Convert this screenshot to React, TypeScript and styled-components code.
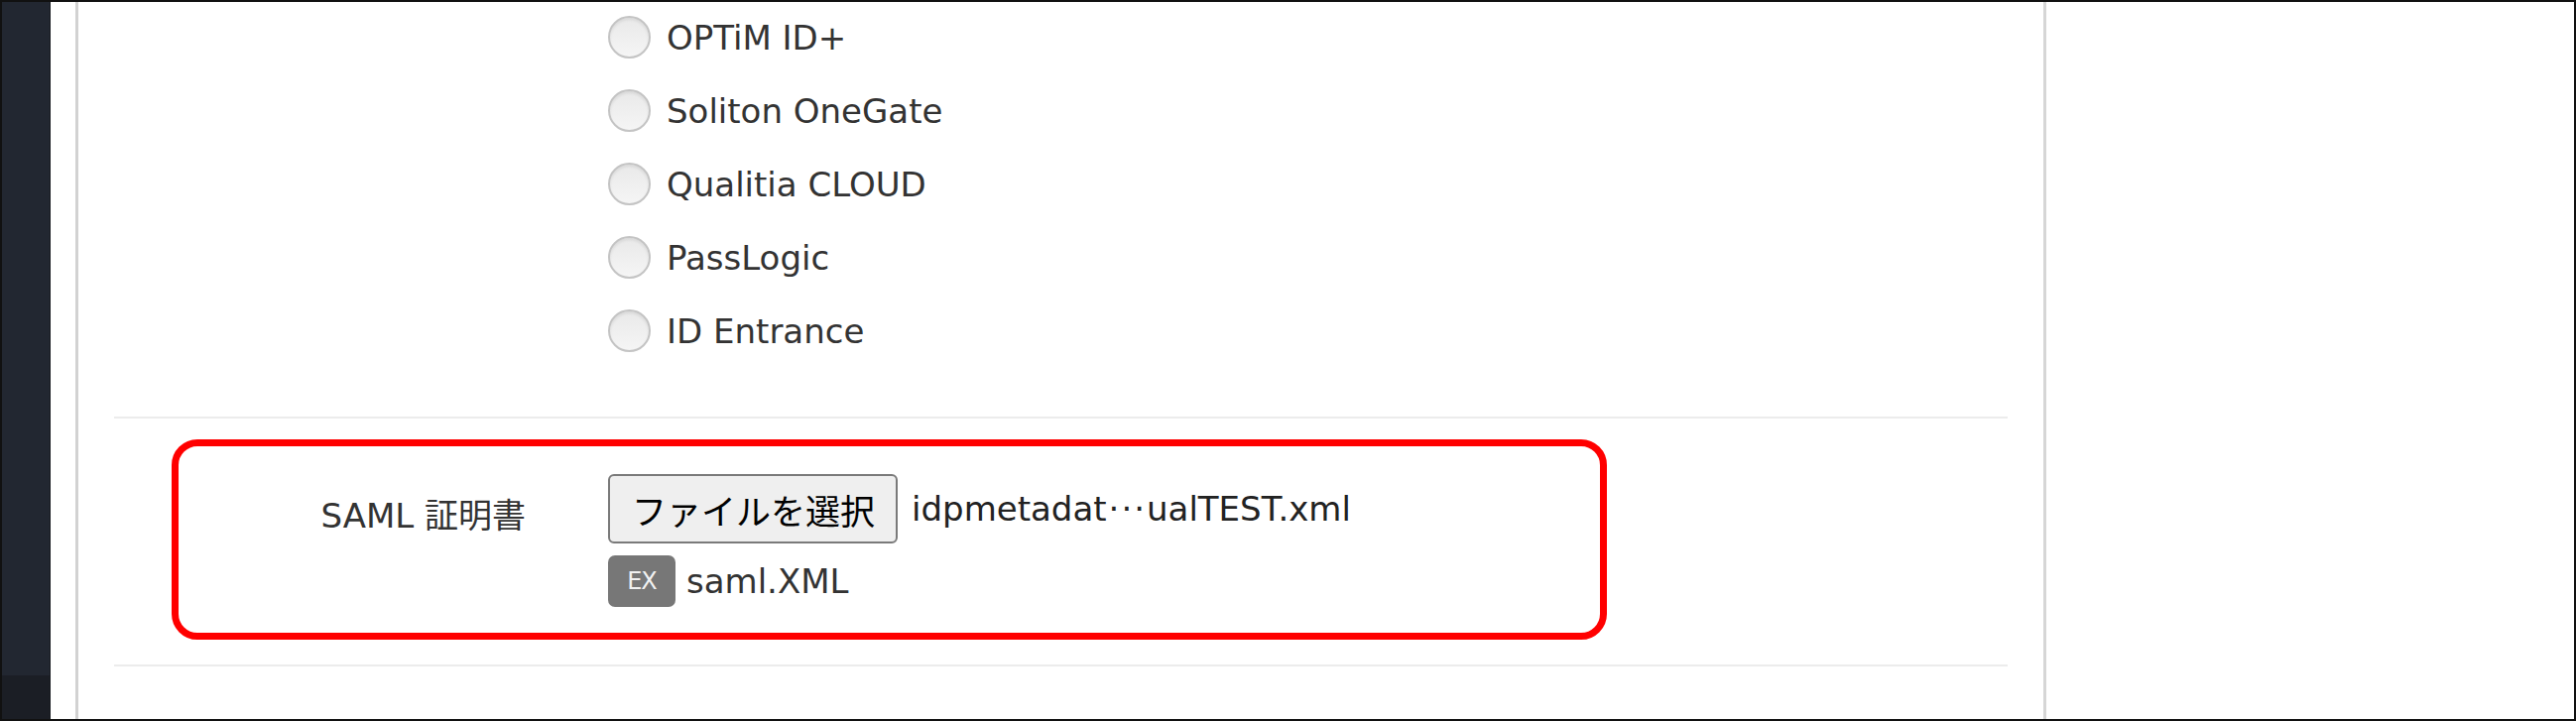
import React from "react";
import styled, { createGlobalStyle } from "styled-components";

const GlobalStyle = createGlobalStyle`
  html, body {
    margin: 0;
    padding: 0;
    background: #ffffff;
  }
  body {
    width: 2597px;
    height: 727px;
    overflow: hidden;
    font-family: "DejaVu Sans", "Noto Sans CJK JP", sans-serif;
    color: #333333;
  }
  * { box-sizing: border-box; }
`;

const Frame = styled.div`
  width: 2597px;
  height: 727px;
  border: 2px solid #111111;
  display: flex;
  background: #ffffff;
`;

const Sidebar = styled.aside`
  width: 49px;
  display: flex;
  flex-direction: column;
  border-right: 1px solid #15181d;
`;

const SidebarBody = styled.div`
  flex: 1;
  background: #222731;
`;

const SidebarFoot = styled.div`
  height: 44px;
  background: #1b1e25;
`;

const Gutter = styled.div`
  width: 28px;
  border-right: 3px solid #d2d2d2;
  background: #ffffff;
`;

const Main = styled.main`
  width: 1984px;
  padding: 0 36px;
  border-right: 3px solid #d6d6d6;
  display: flex;
  flex-direction: column;
`;

const Aside = styled.div`
  flex: 1;
  background: #ffffff;
`;

const FieldRow = styled.div<{ $labelWidth: number }>`
  display: grid;
  grid-template-columns: ${(p) => p.$labelWidth}px 1fr;
`;

const Divider = styled.hr`
  margin: 0;
  border: 0;
  height: 2px;
  background: #ececec;
`;

const RadioList = styled.div`
  display: flex;
  flex-direction: column;
  gap: 31px;
  padding: 14px 0 65px;
`;

const RadioItem = styled.label`
  display: flex;
  align-items: center;
  gap: 16px;
  height: 43px;
  font-size: 34px;
  color: #333333;
  white-space: nowrap;
`;

const RadioCircle = styled.span`
  width: 43px;
  height: 43px;
  border-radius: 50%;
  border: 2px solid #c4c4c4;
  background: linear-gradient(#e9e9e9, #f5f5f5);
  box-shadow: inset 0 2px 3px rgba(0, 0, 0, 0.08);
  flex: none;
`;

const Highlight = styled.div`
  margin: 21px 0 25px 58px;
  width: 1447px;
  border: 7px solid #ff0000;
  border-radius: 26px;
  padding: 28px 0 26px;
`;

const FieldLabel = styled.div`
  text-align: right;
  padding: 22px 83px 0 0;
  font-size: 34px;
  line-height: 40px;
  color: #333333;
  white-space: nowrap;
`;

const FieldValue = styled.div`
  display: flex;
  flex-direction: column;
  gap: 12px;
`;

const FileLine = styled.div`
  display: flex;
  align-items: center;
  gap: 14px;
  height: 70px;
`;

const FileButton = styled.button`
  height: 70px;
  padding: 0 21px 0 22px;
  border: 2.5px solid #7a7a7a;
  border-radius: 6px;
  background: #efefef;
  color: #000000;
  font-family: "Noto Sans CJK JP", sans-serif;
  font-size: 35px;
  line-height: 1;
  white-space: nowrap;
`;

const FileName = styled.span`
  font-size: 34px;
  color: #222222;
  white-space: nowrap;
`;

const MidEllipsis = styled.span`
  letter-spacing: 2px;
  padding-left: 2px;
`;

const ExampleLine = styled.div`
  display: flex;
  align-items: center;
  gap: 11px;
  height: 52px;
`;

const ExBadge = styled.span`
  width: 68px;
  height: 52px;
  border-radius: 7px;
  background: #777777;
  color: #f2f2f2;
  font-size: 24px;
  font-weight: 400;
  display: flex;
  align-items: center;
  justify-content: center;
  letter-spacing: -1px;
`;

const ExampleText = styled.span`
  font-size: 34px;
  color: #333333;
`;

const providers = [
  "OPTiM ID+",
  "Soliton OneGate",
  "Qualitia CLOUD",
  "PassLogic",
  "ID Entrance",
];

export default function App() {
  return (
    <>
      <GlobalStyle />
      <Frame>
        <Sidebar>
          <SidebarBody />
          <SidebarFoot />
        </Sidebar>
        <Gutter />
        <Main>
          <FieldRow $labelWidth={498}>
            <div />
            <RadioList>
              {providers.map((p) => (
                <RadioItem key={p}>
                  <RadioCircle />
                  {p}
                </RadioItem>
              ))}
            </RadioList>
          </FieldRow>
          <Divider />
          <Highlight>
            <FieldRow $labelWidth={433}>
              <FieldLabel>SAML 証明書</FieldLabel>
              <FieldValue>
                <FileLine>
                  <FileButton type="button">ファイルを選択</FileButton>
                  <FileName>
                    idpmetadat<MidEllipsis>···</MidEllipsis>ualTEST.xml
                  </FileName>
                </FileLine>
                <ExampleLine>
                  <ExBadge>EX</ExBadge>
                  <ExampleText>saml.XML</ExampleText>
                </ExampleLine>
              </FieldValue>
            </FieldRow>
          </Highlight>
          <Divider />
        </Main>
        <Aside />
      </Frame>
    </>
  );
}
